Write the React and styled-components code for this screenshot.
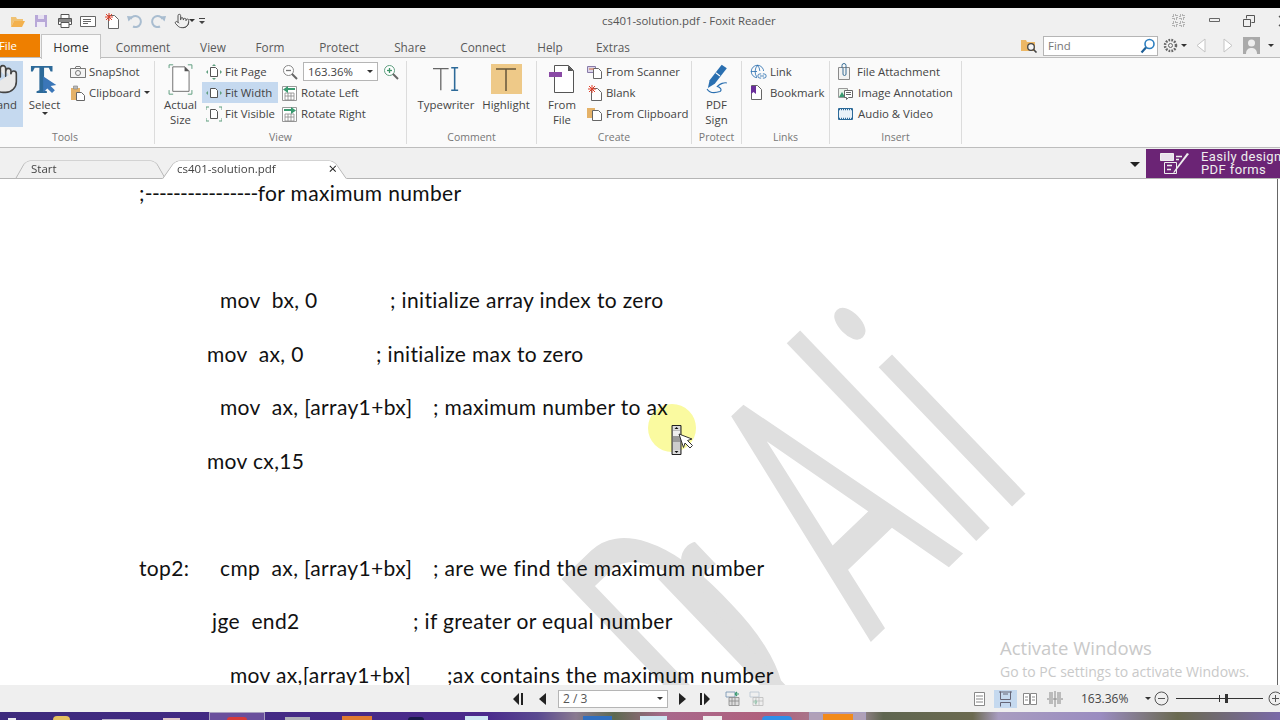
import React from "react"
import styled, { createGlobalStyle } from "styled-components"
import { Pointer, Hand, Globe, Link2 } from "lucide-react"

const GlobalStyle = createGlobalStyle`
    html, body { margin: 0; padding: 0; height: 100%; overflow: hidden; background: #000; }
    #root { height: 720px; }
`

const uiFont = `"Open Sans", "Noto Sans", "Liberation Sans", sans-serif`

const Page = styled.div`
    width: 1280px;
    height: 720px;
    display: flex;
    flex-direction: column;
    overflow: hidden;
    font-family: ${uiFont};
    font-size: 11.4px;
    color: #444;
    background: #000;
    padding-top: 8px;
    box-sizing: border-box;
`
const Gap = styled.span`
    display: block;
    flex: none;
    width: ${p => p.$w}px;
`

/* title bar */
const TitleBar = styled.div`
    height: 25px;
    flex: none;
    display: flex;
    align-items: center;
    background: #f0f0f0;
`
const Quick = styled.div`
    width: 602px;
    flex: none;
    display: flex;
    align-items: center;
    gap: 7.4px;
    padding-left: 10px;
    box-sizing: border-box;
`
const Title = styled.div`
    color: #555;
`
const WindowBtns = styled.div`
    margin-left: auto;
    display: flex;
    align-items: center;
    gap: 23px;
    margin-right: -10px;
`

/* tab strip */
const TabStrip = styled.div`
    height: 25px;
    flex: none;
    display: flex;
    align-items: stretch;
    background: #f0f0f0;
    border-bottom: 1px solid #bdbdbd;
    box-sizing: border-box;
    position: relative;
    padding-top: 1px;
`
const FileTab = styled.div`
    width: 40px;
    flex: none;
    background: #ee7f00;
    color: #fff;
    display: flex;
    align-items: center;
    justify-content: flex-end;
    padding-right: 23px;
    box-sizing: border-box;
    overflow: hidden;
`
const HomeTab = styled.div`
    width: 60px;
    margin-left: 1px;
    height: 25px;
    flex: none;
    background: #fafafa;
    border: 1px solid #c4c4c4;
    border-bottom: 0;
    box-sizing: border-box;
    display: flex;
    align-items: center;
    justify-content: center;
    font-size: 12.5px;
    color: #333;
    z-index: 1;
`
const Tab = styled.div`
    width: ${p => p.$w}px;
    flex: none;
    display: flex;
    align-items: center;
    justify-content: center;
    font-size: 11.8px;
    color: #5a5a5a;
    padding-top: 2px;
    box-sizing: border-box;
`
const FindArea = styled.div`
    margin-left: auto;
    display: flex;
    align-items: center;
    padding-right: 6px;
`
const FindBox = styled.div`
    width: 115px;
    height: 20px;
    margin: 0 5px;
    background: #fff;
    border: 1px solid #b5b5b5;
    box-sizing: border-box;
    display: flex;
    align-items: center;
    justify-content: space-between;
    padding: 0 1px 0 4px;
    color: #777;
`
const Caret = styled.span`
    display: inline-block;
    width: 0;
    height: 0;
    border-left: 3px solid transparent;
    border-right: 3px solid transparent;
    border-top: 3px solid #333;
    margin-left: ${p => p.$ml || 0}px;
    margin-right: ${p => p.$mr || 0}px;
    flex: none;
`

/* ribbon */
const Ribbon = styled.div`
    height: 90px;
    flex: none;
    display: flex;
    background: #fafafa;
    border-bottom: 1px solid #bdbdbd;
    box-sizing: border-box;
    padding-top: 3px;
`
const Group = styled.div`
    width: ${p => p.$w}px;
    flex: none;
    height: 83px;
    box-sizing: border-box;
    border-right: 1px solid #dcdcdc;
    display: flex;
    flex-direction: column;
`
const GroupBody = styled.div`
    height: 66px;
    display: flex;
    gap: ${p => p.$gap || 0}px;
    padding-left: ${p => p.$pl || 0}px;
    box-sizing: border-box;
`
const GroupLabel = styled.div`
    height: 17px;
    line-height: 20px;
    text-align: center;
    color: #777;
    font-size: 10.5px;
    padding-right: ${p => p.$pr || 0}px;
`
const HandBtn = styled.div`
    width: 23px;
    height: 66px;
    flex: none;
    background: #c5d9ef;
    overflow: hidden;
    position: relative;
    display: flex;
    flex-direction: column;
    align-items: flex-end;
    padding-right: 6px;
    box-sizing: border-box;
`
const HandIcon = styled.div`
    height: 34px;
    margin-right: -2px;
    margin-top: 2px;
    flex: none;
`
const HandText = styled.div`
    white-space: nowrap;
    color: #444;
    line-height: 15px;
`
const BigBtn = styled.div`
    width: ${p => p.$w}px;
    flex: none;
    display: flex;
    flex-direction: column;
    align-items: center;
    text-align: center;
    line-height: 15px;
    white-space: nowrap;
`
const BigIcon = styled.div`
    height: 36px;
    display: flex;
    align-items: center;
    justify-content: center;
    flex: none;
`
const SmallCol = styled.div`
    display: flex;
    flex-direction: column;
    width: ${p => p.$w ? p.$w + "px" : "auto"};
    flex: none;
`
const SmallBtn = styled.div`
    height: 21px;
    display: flex;
    align-items: center;
    gap: ${p => p.$gap || 4}px;
    padding: 0 4px;
    white-space: nowrap;
    background: ${p => p.$on ? "#c5d9ef" : "transparent"};
`
const ZoomBox = styled.div`
    width: 75px;
    height: 19px;
    background: #fff;
    border: 1px solid #b5b5b5;
    box-sizing: border-box;
    display: flex;
    align-items: center;
    justify-content: space-between;
    padding: 0 4px;
    color: #444;
`

/* document tabs */
const DocTabs = styled.div`
    height: 31px;
    flex: none;
    background: #f0f0f0;
    border-bottom: 1px solid #b5b5b5;
    box-sizing: border-box;
    display: flex;
    align-items: flex-end;
    padding-left: 15px;
    position: relative;
`
const DocTab = styled.div`
    width: ${p => p.$w}px;
    height: 23px;
    flex: none;
    position: relative;
    margin-bottom: -1px;
    margin-left: ${p => p.$ml || 0}px;
    display: flex;
    align-items: center;
    justify-content: space-between;
    padding: 1px ${p => p.$pr}px 0 ${p => p.$pl}px;
    box-sizing: border-box;
    font-size: 11.5px;
    color: #444;
    &::before {
        content: "";
        position: absolute;
        inset: 0;
        background: ${p => p.$on ? "#fff" : "#f0f0f0"};
        border: 1px solid #b5b5b5;
        border-bottom: ${p => p.$on ? "1px solid #fff" : "1px solid #b5b5b5"};
        border-radius: 6px 6px 0 0;
        transform: perspective(48px) rotateX(20deg);
        transform-origin: bottom center;
    }
`
const DocTabText = styled.span`
    position: relative;
`
const TabClose = styled.span`
    position: relative;
    font-size: 15px;
    color: #222;
`
const TabMenu = styled.div`
    margin-left: auto;
    margin-right: 6px;
    margin-bottom: 11px;
    width: 0;
    height: 0;
    border-left: 5px solid transparent;
    border-right: 5px solid transparent;
    border-top: 5px solid #222;
`
const Promo = styled.div`
    width: 134px;
    height: 29px;
    flex: none;
    background: #6b2475;
    color: #eee;
    display: flex;
    align-items: center;
    gap: 10px;
    padding: 0 0 2px 14px;
    box-sizing: border-box;
    overflow: hidden;
`
const PromoText = styled.div`
    font-family: Roboto, sans-serif;
    font-size: 13px;
    line-height: 13px;
    white-space: nowrap;
    letter-spacing: 0.4px;
`

/* document */
const Doc = styled.div`
    height: 506px;
    flex: none;
    background: #fff;
    box-shadow: inset -2px 0 #fff, inset -3px 0 #666;
    box-sizing: border-box;
    position: relative;
    overflow: hidden;
    font-family: Lato, "Open Sans", sans-serif;
    font-size: 21px;
    letter-spacing: 0.35px;
    color: #111;
`
const Watermark = styled.div`
    position: absolute;
    left: 729px;
    top: 292px;
    font-family: Roboto, sans-serif;
    font-weight: 400;
    font-size: 365px;
    line-height: 365px;
    letter-spacing: 0;
    word-spacing: 2px;
    color: #dfdfdf;
    white-space: pre;
    transform: rotate(-43.8deg) scaleX(0.56);
    transform-origin: 0 307px;
`
const WatermarkD = styled.span`
    letter-spacing: -110px;
`
const Lines = styled.div`
    position: relative;
    margin-top: -13px;
`
const Line = styled.div`
    height: 53.55px;
    line-height: 53.55px;
    padding-left: ${p => p.$x}px;
    display: flex;
    white-space: pre;
`
const Code = styled.span`
    width: ${p => p.$w}px;
    flex: none;
`
const Dashes = styled.span`
    letter-spacing: -0.75px;
`
const Spot = styled.div`
    position: absolute;
    left: 648px;
    top: 225px;
    width: 48px;
    height: 48px;
    border-radius: 50%;
    background: #fafaa0;
    mix-blend-mode: multiply;
`
const Cursor = styled.div`
    position: absolute;
    left: 671px;
    top: 246px;
`
const Activate = styled.div`
    position: absolute;
    left: 1000px;
    top: 457px;
    font-family: "Open Sans", sans-serif;
    color: #c9c9c9;
    font-size: 14px;
    letter-spacing: 0;
    line-height: 24px;
`
const ActivateHead = styled.div`
    font-size: 18.5px;
`

/* status bar */
const StatusBar = styled.div`
    height: 27px;
    flex: none;
    background: #efefef;
    display: flex;
    align-items: center;
`
const NavGroup = styled.div`
    margin-left: 512px;
    display: flex;
    align-items: center;
`
const PageBox = styled.div`
    width: 110px;
    height: 18px;
    margin: 0 7px 0 8px;
    background: #fff;
    border: 1px solid #b5b5b5;
    box-sizing: border-box;
    display: flex;
    align-items: center;
    justify-content: space-between;
    padding: 0 4px;
    font-size: 12px;
    color: #555;
`
const ViewGroup = styled.div`
    margin-left: auto;
    margin-right: -3px;
    display: flex;
    align-items: center;
`
const ViewBtn = styled.div`
    width: 23px;
    height: 18px;
    display: flex;
    align-items: center;
    justify-content: center;
    margin-right: ${p => p.$mr || 0}px;
    background: ${p => p.$on ? "#c5d9ef" : "transparent"};
`
const Percent = styled.div`
    width: 64px;
    margin-left: 15px;
    font-size: 12px;
    color: #444;
`
const Slider = styled.div`
    width: 87px;
    height: 1px;
    background: #333;
    margin: 0 5px 0 7px;
    position: relative;
`
const Thumb = styled.div`
    position: absolute;
    left: 49px;
    top: -4px;
    width: 3px;
    height: 9px;
    background: #333;
    &::before {
        content: "";
        position: absolute;
        left: -6px;
        top: 1px;
        width: 1px;
        height: 7px;
        background: #333;
    }
`

/* taskbar, only its top few pixels are in the picture */
const Taskbar = styled.div`
    height: 8px;
    flex: none;
    background: linear-gradient(90deg, #3d2a7c 0%, #4a2a8c 38%, #5a4a90 42%, #8a7a90 45%, #5d6a50 48%, #a8688c 52%, #b0607c 60%, #a08a98 67%, #5f6650 69%, #6b6a50 76%, #a89cc0 78%, #9a8cc0 86%, #6a6a50 92%, #7a6aa8 100%);
    display: flex;
    align-items: flex-end;
    overflow: hidden;
`
const Peek = styled.div`
    width: ${p => p.$w}px;
    height: ${p => p.$h}px;
    margin-left: ${p => p.$ml}px;
    background: ${p => p.$c};
    border-radius: ${p => p.$r || 0}px ${p => p.$r || 0}px 0 0;
    flex: none;
`
const Active = styled.div`
    width: ${p => p.$w}px;
    height: 8px;
    margin-left: ${p => p.$ml}px;
    background: ${p => p.$bg};
    border: 1px solid #a9a0c0;
    border-bottom: 0;
    box-sizing: border-box;
    display: flex;
    align-items: flex-end;
    justify-content: center;
    flex: none;
`

/* icons */
const S = ({ w = 16, h = 16, vb, children }) => (
    <svg width={w} height={h} viewBox={vb || `0 0 ${w} ${h}`} fill="none" style={{ display: "block", flex: "none" }}>
        {children}
    </svg>
)
const PageShape = ({ x = 3, y = 1, w = 10, h = 14, c = "#555" }) => (
    <path d={`M${x + .5} ${y + .5}h${w - 4}l4 4v${h - 4}h-${w}z`} fill="#fff" stroke={c} />
)
const TableShape = ({ x, y, c = "#777" }) => (
    <path d={`M${x} ${y}h9v7h-9zM${x} ${y + 3}h9M${x + 3} ${y}v7M${x + 6} ${y}v7`} stroke={c} strokeWidth=".8" />
)

const IcoFolder = () => <S w={16}><path d="M1 4h5l1 2h6v2H4l-3 6z" fill="#f0c274" /><path d="M4 8h11l-3 6H1z" fill="#f3b14e" /></S>
const IcoSave = () => <S w={16}><path d="M2 2h12v12H2z" fill="#b8a8d8" /><path d="M5 2h6v4H5z" fill="#e8e2f2" /><path d="M4 9h8v5H4z" fill="#efebf6" /></S>
const IcoPrint = () => <S w={16}><path d="M4 1.5h8v4H4zM1.5 5.5h13v6h-13z" fill="#fff" stroke="#555" /><path d="M4 9.5h8v5H4z" fill="#fff" stroke="#555" /><path d="M2 6h12v3H2z" fill="#8a8a8a" /></S>
const IcoProps = () => <S w={16}><path d="M.5 3.5h15v10H.5z" fill="#fff" stroke="#666" /><path d="M3 6.5h8M3 8.5h8M3 10.5h5" stroke="#666" /></S>
const IcoNew = () => <S w={16}><PageShape x={4} y={2} w={10} h={13} c="#666" /><path d="M5 0v8M1 4h8M2 1l6 6M8 1L2 7" stroke="#e0402a" /></S>
const IcoUndo = ({ flip }) => (
    <S w={16}>
        <g transform={flip ? "matrix(-1 0 0 1 16 0)" : undefined}>
            <path d="M3.5 6A5.5 5.5 0 1 1 6 13.5" stroke="#a9bdd0" strokeWidth="2" />
            <path d="M0 3l6 .5-4.5 5z" fill="#a9bdd0" />
        </g>
    </S>
)
const IcoMore = () => <S w={7} h={8}><path d="M0 1h6v1H0zM0 4h6L3 7z" fill="#444" /></S>

const IcoSelect = () => (
    <S w={30} h={30} vb="0 0 32 32">
        <path d="M1 2h23v6h-2l-2-4h-5v24l3 1v2H7v-2l3-1V4H5L3 8H1z" fill="#2d6a99" />
        <path d="M14 13l0 17 4.500-4 5 5 3-3-4.500-4.500 6-1z" fill="#3a76b8" />
    </S>
)
const IcoCamera = () => <S w={16} h={14}><path d="M.5 3.500h15v9H.5z" fill="#f4f4f4" stroke="#777" /><path d="M5 3.500l1-2h4l1 2" stroke="#777" /><circle cx="8" cy="8" r="2.500" stroke="#777" /></S>
const IcoClip = () => (
    <S w={16} h={16}>
        <path d="M1 3h9v12H1z" fill="#e5b268" />
        <path d="M3.500 1h4v3h-4z" fill="#bbb" stroke="#888" strokeWidth=".7" />
        <path d="M6.500 7.500h5l3 3v5h-8z" fill="#fff" stroke="#666" />
    </S>
)
const Corner = ({ d }) => <path d={d} stroke="#5f9e7f" strokeWidth="1.200" />
const IcoActual = () => (
    <S w={27} h={31} vb="0 0 30 38">
        <path d="M5.500 3.500h15l5 5v25h-20z" fill="#fff" stroke="#555" />
        <path d="M20 3.500l5.500 5.500H20z" fill="#555" />
        <Corner d="M1 5V1h5M24 1h5v5M1 32v5h5M29 32v5h-5" />
    </S>
)
const IcoFit = ({ mode }) => (
    <S w={16} h={16}>
        <path d="M4.500 3.500h5l2 2v7h-7z" fill="#fff" stroke="#555" />
        {mode === "page" && <path d="M8 0l2 2H6zM8 16l-2-2h4z" fill="#5f9e7f" />}
        {mode !== "visible" && <path d="M0 8l2-2v4zM16 8l-2-2v4z" fill="#5f9e7f" />}
        {mode === "visible" && <path d="M0 1h3M0 1v3M16 1h-3M16 1v3M0 15h3M0 15v-3M16 15h-3M16 15v-3" stroke="#5f9e7f" />}
    </S>
)
const IcoLens = ({ plus }) => (
    <S w={16} h={16}>
        <circle cx="6.500" cy="6.500" r="5" stroke={plus ? "#5f9e7f" : "#888"} fill="#fff" />
        <path d="M10 10l5 5" stroke="#666" strokeWidth="2" />
        <path d="M4 6.500h5" stroke={plus ? "#3d9468" : "#777"} strokeWidth="1.300" />
        {plus && <path d="M6.500 4v5" stroke="#3d9468" strokeWidth="1.300" />}
    </S>
)
const IcoRotate = ({ right }) => (
    <S w={15} h={16}>
        <path d="M.5 1.500h14v14H.5z" fill="#fff" stroke="#999" />
        <TableShape x={3} y={8} c="#888" />
        <path d={right ? "M2 3h7v-2l5 3.500-5 3.500V5H2z" : "M13 3H6V1L1 4.500 6 8V5h7z"} fill="#3a9a70" />
    </S>
)
const IcoTypewriter = () => (
    <S w={28} h={26} vb="0 0 32 30">
        <path d="M1 3h18M10 3v25" stroke="#666" strokeWidth="1.500" />
        <path d="M22 2h8M26 2v26M22 28h8" stroke="#2d6a99" strokeWidth="1.800" />
    </S>
)
const HighlightBox = styled.div`
    width: 31px;
    height: 30px;
    background: #eec988;
    display: flex;
    align-items: center;
    justify-content: center;
`
const IcoHighT = () => (
    <S w={24} h={26}><path d="M2 3h20M12 3v22" stroke="#66553a" strokeWidth="1.500" /></S>
)
const IcoFromFile = () => (
    <S w={26} h={30}>
        <path d="M5.500 1.500h14l5 5v22h-19z" fill="#fff" stroke="#555" />
        <path d="M19 1.500l5.500 5.500H19z" fill="#555" />
        <path d="M0 8h13v5H0z" fill="#8a4aa5" />
    </S>
)
const IcoScanner = () => (
    <S w={15} h={14}>
        <path d="M.5 1.500h8v6h-8z" fill="#dcd6ea" stroke="#887aa8" />
        <path d="M6.500 3.500h5l3 3v7h-8z" fill="#fff" stroke="#666" />
        <path d="M2 4h5" stroke="#d06a3a" />
    </S>
)
const IcoBlank = () => <S w={15} h={16}><PageShape x={4} y={3} w={10} h={12} c="#666" /><path d="M5 0v8M1 4h8M2 1l6 6M8 1L2 7" stroke="#e0402a" /></S>
const IcoClipFrom = () => (
    <S w={15} h={14}>
        <path d="M0 1h8v10H0z" fill="#e5b268" />
        <path d="M5.500 3.500h6l3 3v7h-9z" fill="#fff" stroke="#666" />
    </S>
)
const IcoPen = () => (
    <S w={29} h={31} vb="0 0 30 36">
        <path d="M21 1l6 4-14 18-8 5 2-9z" fill="#2a6fb0" />
        <path d="M14 10l5 4" stroke="#fff" strokeWidth="1.300" />
        <path d="M4 29c3 5 9 5 15 3 3-2 0-5-3-6 3-3 8-5 11-4" stroke="#2a6fb0" strokeWidth="1.300" />
    </S>
)
const LinkIcon = styled.span`
    position: relative;
    display: block;
    width: 16px;
    height: 16px;
`
const LinkChain = styled.span`
    position: absolute;
    right: -1px;
    bottom: -1px;
    display: block;
    line-height: 0;
    background: #fafafa;
`
const IcoLink = () => (
    <LinkIcon>
        <Globe size={15} color="#2a6fb0" strokeWidth={1.300} />
        <LinkChain><Link2 size={10} color="#2a6fb0" strokeWidth={2} /></LinkChain>
    </LinkIcon>
)
const IcoBookmark = () => (
    <S w={12} h={15}>
        <path d="M1.500 .5h6l4 4v10h-10z" fill="#fff" stroke="#666" />
        <path d="M1 1h5v8L3.500 7 1 9z" fill="#6a2f9a" />
    </S>
)
const IcoAttach = () => (
    <S w={12} h={17}>
        <path d="M.5 4.500h11v12H.5z" fill="#f2f2f2" stroke="#8a8a8a" />
        <path d="M4 5V2.500a2 2 0 0 1 4 0V11a1.500 1.500 0 0 1-3 0V5" stroke="#3a6f96" fill="none" />
    </S>
)
const IcoImgAnn = () => (
    <S w={15} h={14}>
        <path d="M.5 2.500h9v9h-9z" fill="#eaf2ea" stroke="#999" />
        <path d="M1 11l3-5 3 5z" fill="#3a9a70" />
        <path d="M6.500 4.500h8v7h-4l-2 2v-2h-2z" fill="#fff" stroke="#666" />
        <path d="M8 6.500h5M8 8.500h5" stroke="#666" />
    </S>
)
const IcoFilm = () => (
    <S w={15} h={12}>
        <path d="M.5 .5h14v11H.5z" fill="#e9f1f8" stroke="#2d6a99" />
        <path d="M1 1.500h13M1 10.500h13" stroke="#2d6a99" strokeWidth="1.500" strokeDasharray="1 1" />
    </S>
)
const IcoFindFolder = () => (
    <S w={17} h={15}>
        <path d="M0 2h5l1 2h8v9H0z" fill="#ecb765" />
        <circle cx="10" cy="9" r="3.300" fill="#f5f5f5" stroke="#444" strokeWidth="1.300" />
        <path d="M12.500 11.500l3 3" stroke="#444" strokeWidth="1.600" />
    </S>
)
const IcoSearch = () => (
    <S w={16} h={16}>
        <circle cx="9.500" cy="6" r="4.500" stroke="#2d7fc0" strokeWidth="1.600" fill="#fff" />
        <path d="M6 9.500L1.500 14.500" stroke="#1f5f96" strokeWidth="2.200" />
    </S>
)
const IcoGear = () => (
    <S w={15} h={15}>
        <circle cx="7.500" cy="7.500" r="2" stroke="#666" />
        <circle cx="7.500" cy="7.500" r="5.500" stroke="#666" strokeWidth="2.500" strokeDasharray="1.700 1.200" />
    </S>
)
const IcoTri = ({ right }) => (
    <S w={10} h={15}>
        <path d={right ? "M1 1l8 6.500-8 6.500z" : "M9 1L1 7.500l8 6.500z"} fill="#fff" stroke="#c4c4c4" />
    </S>
)
const IcoAvatar = () => (
    <S w={17} h={17}>
        <path d="M0 0h17v17H0z" fill="#aaa" />
        <circle cx="8.500" cy="6" r="3.500" fill="#eee" />
        <path d="M3 17c0-5 3-6 5.500-6s5.500 1 5.500 6z" fill="#eee" />
    </S>
)
const IcoGrid = () => (
    <S w={14} h={13}>
        <path d="M1 1h4v4H1zM8 1h4v4H8zM1 8h4v4H1zM8 8h4v4H8z" stroke="#777" strokeDasharray="1 1" />
    </S>
)
const IcoMin = () => <S w={11} h={5}><path d="M.5 .5h10v3H.5z" stroke="#666" /></S>
const IcoRestore = () => <S w={12} h={12}><path d="M3.500 3.500v-3h8v7h-3" stroke="#555" /><path d="M.5 4.500h7v7h-7z" stroke="#555" /></S>
const IcoClose = () => <S w={12} h={12}><path d="M1 1l10 10M11 1L1 11" stroke="#555" strokeWidth="1.300" /></S>
const IcoForms = () => (
    <S w={31} h={24}>
        <path d="M.5 2.500h13v7H.5z" fill="#e9e0ec" stroke="#eee" />
        <path d="M4.500 11.500h12v11h-12z" stroke="#eee" />
        <path d="M16 5.500h6M16 8.500h3M7 14.500h5M7 18.500h4" stroke="#eee" strokeWidth="1.300" />
        <path d="M29 3L15 21l-2 2 1-3L27 2z" fill="#eee" />
    </S>
)
const navShapes = {
    first: "M7 1v12L1 7zM9 1h2v12H9z",
    prev: "M10 1v12L3 7z",
    next: "M4 1v12l7-6z",
    last: "M3 1h2v12H3zM7 1v12l6-6z",
}
const IcoNav = ({ dir }) => (
    <S w={14} h={14}><path d={navShapes[dir]} fill="#222" /></S>
)
const IcoTableArrow = ({ on }) => (
    <S w={16} h={15}>
        <path d="M2 1h9v5H2z" stroke={on ? "#6f8fb0" : "#b8c4d0"} strokeWidth=".8" />
        <path d="M5 6.500h10v8H5z" fill={on ? "#ddd" : "#eee"} stroke={on ? "#888" : "#bbb"} strokeWidth=".8" />
        <path d="M8 6.500v8M11 6.500v8M5 10h10" stroke={on ? "#888" : "#bbb"} strokeWidth=".8" />
        <path d={on ? "M15 3h-4M11 3l2-2M11 3l2 2" : "M5 11H9M9 11l-2-2M9 11l-2 2"} stroke={on ? "#3a9a70" : "#a0c8b4"} strokeWidth="1.200" />
    </S>
)
const IcoView = ({ kind, c = "#888" }) => (
    <S w={16} h={16}>
        {kind === "single" && <><path d="M2.500 1.500h10v13h-10z" fill="#fff" stroke={c} /><path d="M4 5h7M4 8h7M4 11h7" stroke={c} /></>}
        {kind === "cont" && <><path d="M2.500 .5v8h10v-8" stroke={c} fill="none" /><path d="M1 1h13" stroke={c} /><path d="M2.500 15.500v-4h10v4" stroke={c} fill="none" /><path d="M5 3h5" stroke={c} /></>}
        {kind === "facing" && <><path d="M1.500 2.500h6v11h-6zM8.500 2.500h6v11h-6z" fill="#fff" stroke={c} /><path d="M3 6h3M3 9h3M10 6h3M10 9h3" stroke={c} /></>}
        {kind === "contf" && <><path d="M0 8h16M8 0v16" stroke={c} /><path d="M2 2h4M2 4h4M2 6h4M10 2h4M10 4h4M10 6h4M2 10h4M2 12h4M10 10h4M10 12h4" stroke={c} /></>}
    </S>
)
const IcoCircle = ({ plus }) => (
    <S w={15} h={15}>
        <circle cx="7.500" cy="7.500" r="6.500" stroke="#555" />
        <path d="M4 7.500h7" stroke="#555" />
        {plus && <path d="M7.500 4v7" stroke="#555" />}
    </S>
)
const IcoScrollCursor = () => (
    <S w={24} h={30}>
        <path d="M1 .5h9v29H1z" fill="#bbb" stroke="#222" />
        <path d="M2 1h7v4H2zM2 25h7v4H2z" fill="#ddd" />
        <path d="M5.500 2l2 2h-4zM5.500 28l-2-2h4z" fill="#111" />
        <path d="M2 6h7v5H2z" fill="#eee" />
        <path d="M2 11h7v6H2z" fill="#999" />
        <path d="M2 17h7v8H2z" fill="#ccc" />
        <path d="M8 9l13 5-4.500 1.500 5 5-2.500 2.500-5-5-1.500 4.500z" fill="#fff" stroke="#333" />
    </S>
)

const tabs = [
    ["Comment", 84], ["View", 56], ["Form", 58], ["Protect", 80],
    ["Share", 62], ["Connect", 84], ["Help", 50], ["Extras", 76],
]

const App = () => {
    return (
        <Page>
            <GlobalStyle />
            <TitleBar>
                <Quick>
                    <IcoFolder />
                    <IcoSave />
                    <IcoPrint />
                    <IcoProps />
                    <IcoNew />
                    <IcoUndo />
                    <IcoUndo flip />
                    <Pointer size={16} color="#555" strokeWidth={1.500} />
                    <Caret $ml={-8} $mr={-4} />
                    <IcoMore />
                </Quick>
                <Title>cs401-solution.pdf - Foxit Reader</Title>
                <WindowBtns>
                    <IcoGrid />
                    <IcoMin />
                    <IcoRestore />
                    <IcoClose />
                </WindowBtns>
            </TitleBar>

            <TabStrip>
                <FileTab>File</FileTab>
                <HomeTab>Home</HomeTab>
                {tabs.map(([name, w]) => <Tab key={name} $w={w}>{name}</Tab>)}
                <FindArea>
                    <IcoFindFolder />
                    <FindBox>Find<IcoSearch /></FindBox>
                    <IcoGear />
                    <Caret $ml={3} $mr={9} />
                    <IcoTri />
                    <Gap $w={17} />
                    <IcoTri right />
                    <Gap $w={10} />
                    <IcoAvatar />
                    <Caret $ml={8} />
                </FindArea>
            </TabStrip>

            <Ribbon>
                <Group $w={155}>
                    <GroupBody>
                        <HandBtn>
                            <HandIcon><Hand size={32} color="#444" fill="#e9e9e9" strokeWidth={1.200} /></HandIcon>
                            <HandText>Hand</HandText>
                        </HandBtn>
                        <BigBtn $w={43}>
                            <BigIcon><IcoSelect /></BigIcon>
                            Select
                            <Caret />
                        </BigBtn>
                        <SmallCol>
                            <SmallBtn $gap={3}><IcoCamera />SnapShot</SmallBtn>
                            <SmallBtn $gap={3}><IcoClip />Clipboard<Caret /></SmallBtn>
                        </SmallCol>
                    </GroupBody>
                    <GroupLabel $pr={24}>Tools</GroupLabel>
                </Group>
                <Group $w={252}>
                    <GroupBody $pl={4}>
                        <BigBtn $w={43}>
                            <BigIcon><IcoActual /></BigIcon>
                            Actual<br />Size
                        </BigBtn>
                        <SmallCol $w={76}>
                            <SmallBtn $gap={3}><IcoFit mode="page" />Fit Page</SmallBtn>
                            <SmallBtn $gap={3} $on><IcoFit mode="width" />Fit Width</SmallBtn>
                            <SmallBtn $gap={3}><IcoFit mode="visible" />Fit Visible</SmallBtn>
                        </SmallCol>
                        <SmallCol>
                            <SmallBtn $gap={5}><IcoLens /><ZoomBox>163.36%<Caret /></ZoomBox><IcoLens plus /></SmallBtn>
                            <SmallBtn><IcoRotate />Rotate Left</SmallBtn>
                            <SmallBtn><IcoRotate right />Rotate Right</SmallBtn>
                        </SmallCol>
                    </GroupBody>
                    <GroupLabel>View</GroupLabel>
                </Group>
                <Group $w={130}>
                    <GroupBody $pl={8}>
                        <BigBtn $w={62}>
                            <BigIcon><IcoTypewriter /></BigIcon>
                            Typewriter
                        </BigBtn>
                        <BigBtn $w={58}>
                            <BigIcon><HighlightBox><IcoHighT /></HighlightBox></BigIcon>
                            Highlight
                        </BigBtn>
                    </GroupBody>
                    <GroupLabel>Comment</GroupLabel>
                </Group>
                <Group $w={155}>
                    <GroupBody $pl={6} $gap={2}>
                        <BigBtn $w={38}>
                            <BigIcon><IcoFromFile /></BigIcon>
                            From<br />File
                        </BigBtn>
                        <SmallCol>
                            <SmallBtn><IcoScanner />From Scanner</SmallBtn>
                            <SmallBtn><IcoBlank />Blank</SmallBtn>
                            <SmallBtn><IcoClipFrom />From Clipboard</SmallBtn>
                        </SmallCol>
                    </GroupBody>
                    <GroupLabel>Create</GroupLabel>
                </Group>
                <Group $w={50}>
                    <GroupBody>
                        <BigBtn $w={49}>
                            <BigIcon><IcoPen /></BigIcon>
                            PDF<br />Sign
                        </BigBtn>
                    </GroupBody>
                    <GroupLabel>Protect</GroupLabel>
                </Group>
                <Group $w={88}>
                    <GroupBody $pl={4}>
                        <SmallCol>
                            <SmallBtn $gap={4}><IcoLink />Link</SmallBtn>
                            <SmallBtn $gap={8}><IcoBookmark />Bookmark</SmallBtn>
                        </SmallCol>
                    </GroupBody>
                    <GroupLabel>Links</GroupLabel>
                </Group>
                <Group $w={132}>
                    <GroupBody $pl={4}>
                        <SmallCol>
                            <SmallBtn $gap={7}><IcoAttach />File Attachment</SmallBtn>
                            <SmallBtn $gap={5}><IcoImgAnn />Image Annotation</SmallBtn>
                            <SmallBtn $gap={5}><IcoFilm />Audio &amp; Video</SmallBtn>
                        </SmallCol>
                    </GroupBody>
                    <GroupLabel>Insert</GroupLabel>
                </Group>
            </Ribbon>

            <DocTabs>
                <DocTab $w={151} $pl={16} $pr={10}><DocTabText>Start</DocTabText></DocTab>
                <DocTab $w={185} $on $pl={15} $pr={10} $ml={-4}>
                    <DocTabText>cs401-solution.pdf</DocTabText>
                    <TabClose>×</TabClose>
                </DocTab>
                <TabMenu />
                <Promo>
                    <IcoForms />
                    <PromoText>Easily design<br />PDF forms</PromoText>
                </Promo>
            </DocTabs>

            <Doc>
                <Watermark><WatermarkD>D</WatermarkD>r Ali</Watermark>
                <Lines>
                    <Line $x={139}><span>;<Dashes>----------------</Dashes>for maximum number</span></Line>
                    <Line $x={139}> </Line>
                    <Line $x={220}><Code $w={170}>mov  bx, 0</Code>; initialize array index to zero</Line>
                    <Line $x={207}><Code $w={169}>mov  ax, 0</Code>; initialize max to zero</Line>
                    <Line $x={220}><Code $w={213}>mov  ax, [array1+bx]</Code>; maximum number to ax</Line>
                    <Line $x={207}>mov cx,15</Line>
                    <Line $x={139}> </Line>
                    <Line $x={139}><Code $w={81}>top2:</Code><Code $w={213}>cmp  ax, [array1+bx]</Code>; are we find the maximum number</Line>
                    <Line $x={212}><Code $w={201}>jge  end2</Code>; if greater or equal number</Line>
                    <Line $x={230}><Code $w={217}>mov ax,[array1+bx]</Code>;ax contains the maximum number</Line>
                </Lines>
                <Spot />
                <Cursor><IcoScrollCursor /></Cursor>
                <Activate>
                    <ActivateHead>Activate Windows</ActivateHead>
                    Go to PC settings to activate Windows.
                </Activate>
            </Doc>

            <StatusBar>
                <NavGroup>
                    <IcoNav dir="first" />
                    <Gap $w={10} />
                    <IcoNav dir="prev" />
                    <PageBox>2 / 3<Caret /></PageBox>
                    <IcoNav dir="next" />
                    <Gap $w={8} />
                    <IcoNav dir="last" />
                    <Gap $w={13} />
                    <IcoTableArrow on />
                    <Gap $w={8} />
                    <IcoTableArrow />
                </NavGroup>
                <ViewGroup>
                    <ViewBtn $mr={3}><IcoView kind="single" /></ViewBtn>
                    <ViewBtn $on $mr={1}><IcoView kind="cont" c="#667" /></ViewBtn>
                    <ViewBtn $mr={2}><IcoView kind="facing" /></ViewBtn>
                    <ViewBtn><IcoView kind="contf" /></ViewBtn>
                    <Percent>163.36%</Percent>
                    <Caret $mr={3} />
                    <IcoCircle />
                    <Slider><Thumb /></Slider>
                    <IcoCircle plus />
                </ViewGroup>
            </StatusBar>

            <Taskbar>
                <Peek $ml={8} $w={8} $h={2} $c="#e8e8ee" />
                <Peek $ml={37} $w={17} $h={4} $c="#e5c060" $r={4} />
                <Peek $ml={32} $w={28} $h={1} $c="#b8b0c8" />
                <Peek $ml={33} $w={17} $h={2} $c="#e0c8c8" />
                <Active $ml={29} $w={56} $bg="#6a4f9c"><Peek $ml={0} $w={20} $h={3} $c="#d83a3a" $r={6} /></Active>
                <Peek $ml={20} $w={25} $h={3} $c="#b0b0b8" />
                <Peek $ml={32} $w={30} $h={4} $c="#e07a30" />
                <Peek $ml={36} $w={16} $h={3} $c="#1a1a4a" $r={8} />
                <Peek $ml={41} $w={23} $h={4} $c="#cfe6f2" />
                <Peek $ml={95} $w={29} $h={4} $c="#2f6fc0" />
                <Peek $ml={28} $w={27} $h={4} $c="#cfe6f2" />
                <Peek $ml={36} $w={19} $h={4} $c="#eeeeee" />
                <Peek $ml={40} $w={30} $h={4} $c="#2f8fe8" $r={4} />
                <Active $ml={17} $w={57} $bg="#b0a0b8"><Peek $ml={0} $w={30} $h={6} $c="#f28a1a" /></Active>
            </Taskbar>
        </Page>
    )
}

export default App
